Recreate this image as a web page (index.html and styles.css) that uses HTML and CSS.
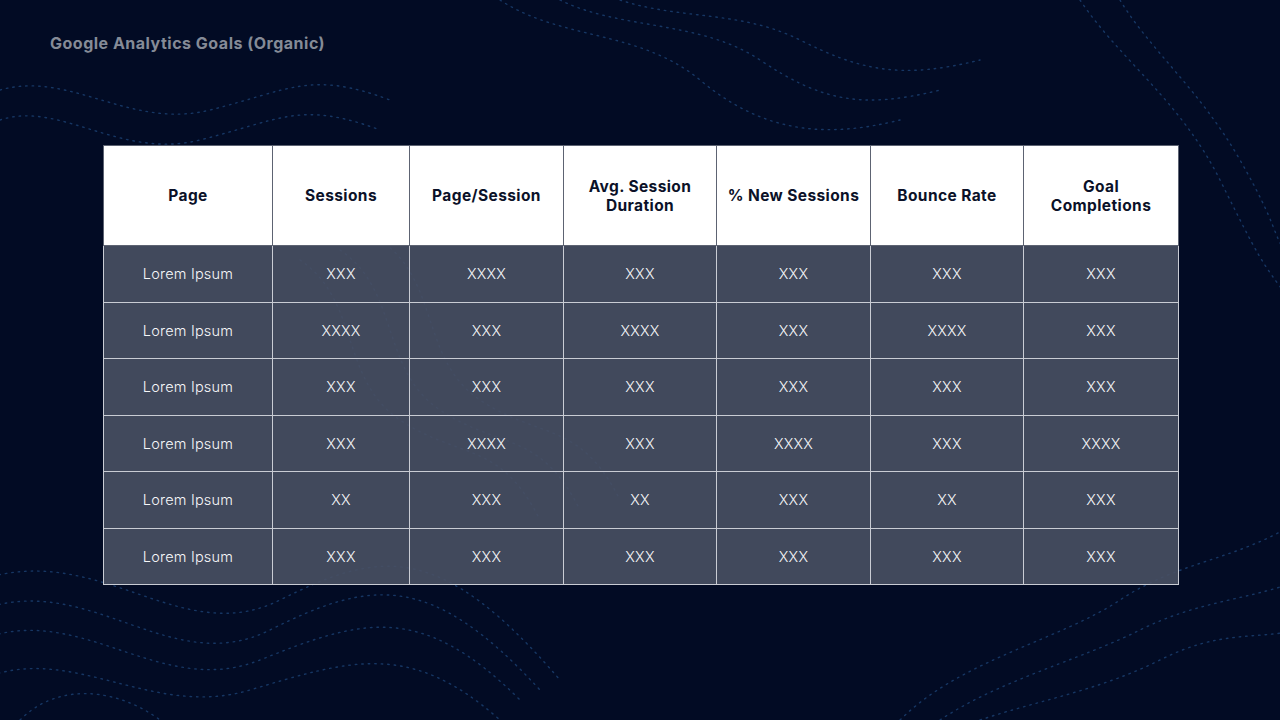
FILE: index.html
```html
<!DOCTYPE html>
<html lang="en">
<head>
<meta charset="utf-8">
<title>Google Analytics Goals (Organic)</title>
<link rel="stylesheet" href="styles.css">
</head>
<body>
<div class="slide">
  <svg class="bg" width="1280" height="720" viewBox="0 0 1280 720" aria-hidden="true">
    <g fill="none" stroke="#2f6bb0" stroke-width="1.4" stroke-dasharray="1.5 5" stroke-linecap="round">
      <path d="M-20 640 C 80 600, 160 700, 260 660 S 420 600, 520 700"/>
      <path d="M-20 610 C 90 570, 170 680, 270 630 S 430 570, 540 690"/>
      <path d="M-20 580 C 100 540, 180 650, 280 600 S 440 540, 560 680"/>
      <path d="M-20 680 C 70 640, 150 720, 250 690 S 410 640, 500 720"/>
      <path d="M20 720 C 60 680, 120 690, 160 720"/>
      <path d="M900 720 C 960 660, 1060 640, 1120 600 S 1240 560, 1300 520"/>
      <path d="M940 720 C 1000 680, 1080 660, 1140 630 S 1250 600, 1300 580"/>
      <path d="M980 720 C 1040 700, 1100 690, 1160 660 S 1250 640, 1300 630"/>
      <path d="M500 0 C 560 40, 640 30, 700 80 S 820 140, 900 120"/>
      <path d="M560 0 C 620 30, 700 20, 760 60 S 860 110, 940 90"/>
      <path d="M620 0 C 680 20, 740 10, 800 40 S 900 80, 980 60"/>
      <path d="M1080 0 C 1120 60, 1180 100, 1220 180 S 1260 260, 1290 300"/>
      <path d="M1120 0 C 1150 50, 1200 90, 1240 160 S 1270 230, 1290 260"/>
      <path d="M0 120 C 60 100, 120 160, 200 140 S 300 100, 380 130"/>
      <path d="M0 90 C 70 70, 130 130, 210 110 S 310 70, 390 100"/>
      <path d="M300 260 C 360 300, 340 380, 400 420 S 500 440, 540 520"/>
      <path d="M340 250 C 400 290, 380 370, 440 410 S 540 430, 580 510"/>
      <path d="M380 240 C 440 280, 420 360, 480 400 S 580 420, 620 500"/>
    </g>
  </svg>

  <h1 class="title">Google Analytics Goals (Organic)</h1>

  <div class="table-wrap">
    <table class="goals">
      <colgroup>
        <col class="c-page"><col class="c-sess"><col class="c-ps"><col class="c-avg"><col class="c-new"><col class="c-bounce"><col class="c-goal">
      </colgroup>
      <thead>
        <tr>
          <th>Page</th>
          <th>Sessions</th>
          <th>Page/Session</th>
          <th>Avg. Session<br>Duration</th>
          <th>% New Sessions</th>
          <th>Bounce Rate</th>
          <th>Goal<br>Completions</th>
        </tr>
      </thead>
      <tbody>
        <tr><td>Lorem Ipsum</td><td>XXX</td><td>XXXX</td><td>XXX</td><td>XXX</td><td>XXX</td><td>XXX</td></tr>
        <tr><td>Lorem Ipsum</td><td>XXXX</td><td>XXX</td><td>XXXX</td><td>XXX</td><td>XXXX</td><td>XXX</td></tr>
        <tr><td>Lorem Ipsum</td><td>XXX</td><td>XXX</td><td>XXX</td><td>XXX</td><td>XXX</td><td>XXX</td></tr>
        <tr><td>Lorem Ipsum</td><td>XXX</td><td>XXXX</td><td>XXX</td><td>XXXX</td><td>XXX</td><td>XXXX</td></tr>
        <tr><td>Lorem Ipsum</td><td>XX</td><td>XXX</td><td>XX</td><td>XXX</td><td>XX</td><td>XXX</td></tr>
        <tr><td>Lorem Ipsum</td><td>XXX</td><td>XXX</td><td>XXX</td><td>XXX</td><td>XXX</td><td>XXX</td></tr>
      </tbody>
    </table>
  </div>
</div>
</body>
</html>
```

FILE: styles.css
```css
* { box-sizing: border-box; }

html, body {
  margin: 0;
  padding: 0;
  background: #020b24;
}

.slide {
  position: relative;
  width: 1280px;
  height: 720px;
  overflow: hidden;
  background: #020b24;
  font-family: "Inter", "Liberation Sans", sans-serif;
}

.bg {
  position: absolute;
  left: 0;
  top: 0;
  opacity: 0.45;
}

.title {
  position: relative;
  margin: 0;
  padding: 34px 0 0 50px;
  font-family: "Inter", "Liberation Sans", sans-serif;
  font-size: 16px;
  font-weight: 700;
  letter-spacing: 0.5px;
  line-height: 18px;
  color: #858b97;
}

.table-wrap {
  position: relative;
  padding: 93px 0 0 103px;
}

.goals {
  width: 1075px;
  border-collapse: collapse;
  table-layout: fixed;
}

.c-page { width: 169px; }
.c-sess { width: 137px; }
.c-ps { width: 154px; }
.c-avg { width: 153px; }
.c-new { width: 154px; }
.c-bounce { width: 153px; }
.c-goal { width: 155px; }

.goals th {
  height: 100px;
  background: #ffffff;
  color: #0b1128;
  font-family: "Inter", "Liberation Sans", sans-serif;
  font-weight: 700;
  font-size: 15.5px;
  letter-spacing: 0.4px;
  line-height: 19px;
  text-align: center;
  vertical-align: middle;
  border: 1px solid #5d6372;
  padding: 0 4px;
}

.goals td {
  height: 56.5px;
  background: rgba(72, 80, 99, 0.9);
  color: #f6f7f9;
  font-family: "Inter", "Liberation Sans", sans-serif;
  font-weight: 300;
  font-size: 14.5px;
  letter-spacing: 0.2px;
  text-align: center;
  vertical-align: middle;
  border: 1.5px solid #c9ccd4;
  padding: 0;
}

.goals tbody tr:first-child td {
  border-top-color: #2c3244;
}
```
